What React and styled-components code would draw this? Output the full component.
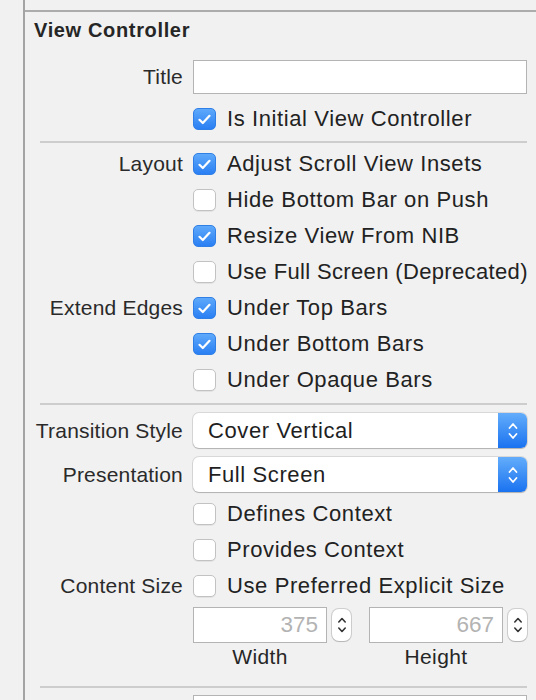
import React from "react";
import styled, { createGlobalStyle } from "styled-components";

const Global = createGlobalStyle`
  html, body { margin: 0; padding: 0; background: #f1f1f1; }
  body { font-family: "Liberation Sans", Arial, sans-serif; color: #262626; }
`;

const Page = styled.div`
  display: flex;
  width: 536px;
  height: 700px;
  overflow: hidden;
  background: #f1f1f1;
`;

const Gutter = styled.div`
  width: 23px;
  flex: none;
  border-right: 2px solid #a3a3a3;
`;

const Inspector = styled.div`
  flex: 1;
  min-width: 0;
`;

const TopStrip = styled.div`
  height: 10px;
  border-bottom: 2px solid #acacac;
`;

const Header = styled.div`
  height: 36px;
  display: flex;
  align-items: center;
  padding-left: 9px;
  font-weight: bold;
  font-size: 20px;
  letter-spacing: 0.65px;
  color: #262626;
`;

const Grid = styled.div`
  display: grid;
  grid-template-columns: 158px 334px;
  column-gap: 10px;
  padding-right: 9px;
  align-items: center;
`;

const Label = styled.div`
  grid-column: 1;
  text-align: right;
  font-size: 21px;
  letter-spacing: 0.2px;
  color: #2a2a2a;
  white-space: nowrap;
  height: ${(p) => p.h || 36}px;
  line-height: ${(p) => p.h || 36}px;
  margin-top: ${(p) => p.mt || 0}px;
`;

const Cell = styled.div`
  grid-column: 2;
  height: ${(p) => p.h || 36}px;
  margin-top: ${(p) => p.mt || 0}px;
  display: flex;
  align-items: center;
`;

const SizeCell = styled(Cell)`
  align-items: flex-start;
  padding-top: 3px;
`;

const Separator = styled.div`
  grid-column: 1 / span 2;
  margin-left: 15px;
  height: 2px;
  background: #cdcdcd;
  margin-top: ${(p) => p.mt || 0}px;
  margin-bottom: ${(p) => p.mb || 0}px;
`;

const TextField = styled.div`
  box-sizing: border-box;
  width: ${(p) => p.w || 334}px;
  height: ${(p) => p.h || 34}px;
  background: #fff;
  border: 1px solid #b4b4b4;
  display: flex;
  align-items: center;
  justify-content: flex-end;
  padding-right: 8px;
  font-size: 22.5px;
  color: #b3b3b3;
`;

const Box = styled.span`
  box-sizing: border-box;
  width: 23px;
  height: 22px;
  flex: none;
  border-radius: 5px;
  display: flex;
  align-items: center;
  justify-content: center;
  background: ${(p) =>
    p.checked ? "linear-gradient(#5ea9fb, #2a7ff3)" : "#ffffff"};
  border: 1px solid ${(p) => (p.checked ? "#2f7fe6" : "#c2c2c2")};
  box-shadow: ${(p) => (p.checked ? "none" : "0 1px 0 rgba(0,0,0,0.06)")};
`;

const CheckText = styled.span`
  margin-left: 11px;
  font-size: 22px;
  letter-spacing: ${(p) => (p.tight ? "0.35px" : "0.6px")};
  color: #222;
  white-space: nowrap;
`;

const Popup = styled.div`
  box-sizing: border-box;
  width: 334px;
  height: 35px;
  display: flex;
  background: #fff;
  border-radius: 6px;
  box-shadow: 0 0 0 1px rgba(0, 0, 0, 0.1), 0 1px 1px rgba(0, 0, 0, 0.18);
  overflow: hidden;
`;

const PopupText = styled.div`
  flex: 1;
  display: flex;
  align-items: center;
  padding-left: 15px;
  font-size: 22px;
  letter-spacing: 0.6px;
  color: #1f1f1f;
`;

const PopupArrows = styled.div`
  width: 29px;
  display: flex;
  align-items: center;
  justify-content: center;
  background: linear-gradient(#63adfb, #1a72f0);
`;

const SizeRow = styled.div`
  display: flex;
  gap: 5px;
  align-items: center;
`;

const SizeGroup = styled.div`
  display: flex;
  flex-direction: column;
  align-items: stretch;
  margin-right: ${(p) => p.mr || 0}px;
`;

const Stepper = styled.div`
  box-sizing: border-box;
  width: 19px;
  height: 32px;
  background: #fff;
  border-radius: 7px;
  box-shadow: 0 0 0 1px rgba(0, 0, 0, 0.14), 0 1px 1px rgba(0, 0, 0, 0.12);
  display: flex;
  align-items: center;
  justify-content: center;
`;

const Caption = styled.div`
  width: 134px;
  text-align: center;
  font-size: 21px;
  letter-spacing: 0.4px;
  color: #262626;
  height: 28px;
  line-height: 28px;
`;

const CheckMark = () => (
  <svg width="13" height="11" viewBox="0 0 13 11">
    <path
      d="M1.5 5.8 L4.8 9 L11.5 1.8"
      fill="none"
      stroke="#fff"
      strokeWidth="2.2"
      strokeLinecap="round"
      strokeLinejoin="round"
    />
  </svg>
);

const Check = ({ checked, children, mt, tight }) => (
  <Cell mt={mt}>
    <Box checked={checked}>{checked && <CheckMark />}</Box>
    <CheckText tight={tight}>{children}</CheckText>
  </Cell>
);

const Chevrons = ({ color }) => (
  <svg width="10" height="22" viewBox="0 0 10 22">
    <path
      d="M1.5 8 L5 4 L8.5 8 M1.5 14 L5 18 L8.5 14"
      fill="none"
      stroke={color}
      strokeWidth="1.8"
      strokeLinecap="round"
      strokeLinejoin="round"
    />
  </svg>
);

const PopupButton = ({ value }) => (
  <Popup>
    <PopupText>{value}</PopupText>
    <PopupArrows>
      <Chevrons color="#fff" />
    </PopupArrows>
  </Popup>
);

const NumberField = ({ value, caption, mr }) => (
  <SizeGroup mr={mr}>
    <SizeRow>
      <TextField w={134} h={36}>
        {value}
      </TextField>
      <Stepper>
        <svg width="10" height="24" viewBox="0 0 10 24">
          <path
            d="M1.8 9 L5 5.5 L8.2 9 M1.8 15 L5 18.5 L8.2 15"
            fill="none"
            stroke="#333"
            strokeWidth="1.6"
            strokeLinecap="round"
            strokeLinejoin="round"
          />
        </svg>
      </Stepper>
    </SizeRow>
    <Caption>{caption}</Caption>
  </SizeGroup>
);

export default function App() {
  return (
    <>
      <Global />
      <Page>
        <Gutter />
        <Inspector>
          <TopStrip />
          <Header>View Controller</Header>
          <Grid>
            <Label h={34} mt={12}>Title</Label>
            <Cell h={34} mt={12}>
              <TextField />
            </Cell>
            <Label mt={7} />
            <Check checked mt={7}>Is Initial View Controller</Check>
            <Separator mt={4} mb={3} />

            <Label>Layout</Label>
            <Check checked>Adjust Scroll View Insets</Check>
            <Label />
            <Check>Hide Bottom Bar on Push</Check>
            <Label />
            <Check checked>Resize View From NIB</Check>
            <Label />
            <Check tight>Use Full Screen (Deprecated)</Check>
            <Label>Extend Edges</Label>
            <Check checked>Under Top Bars</Check>
            <Label />
            <Check checked>Under Bottom Bars</Check>
            <Label />
            <Check>Under Opaque Bars</Check>
            <Separator mt={5} mb={8} />

            <Label h={35}>Transition Style</Label>
            <Cell h={35}>
              <PopupButton value="Cover Vertical" />
            </Cell>
            <Label h={35} mt={9}>Presentation</Label>
            <Cell h={35} mt={9}>
              <PopupButton value="Full Screen" />
            </Cell>
            <Label mt={4} />
            <Check mt={4}>Defines Context</Check>
            <Label />
            <Check>Provides Context</Check>
            <Label>Content Size</Label>
            <Check>Use Preferred Explicit Size</Check>
            <Label h={64} />
            <SizeCell h={64}>
              <NumberField value="375" caption="Width" mr={18} />
              <NumberField value="667" caption="Height" />
            </SizeCell>
            <Separator mt={15} mb={7} />
            <Label h={34} />
            <Cell h={34}>
              <TextField />
            </Cell>
          </Grid>
        </Inspector>
      </Page>
    </>
  );
}
